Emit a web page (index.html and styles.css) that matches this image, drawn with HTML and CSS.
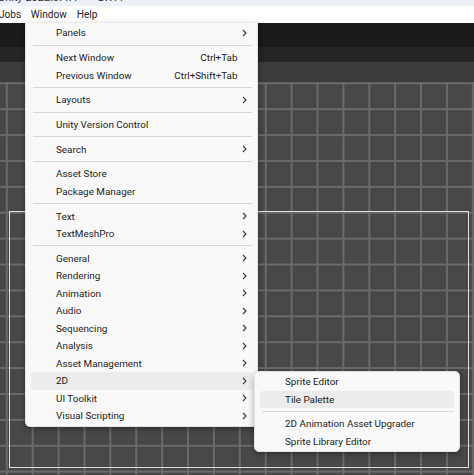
FILE: index.html
```html
<!DOCTYPE html>
<html>
<head>
<meta charset="utf-8">
<link rel="stylesheet" href="styles.css">
</head>
<body>
<div class="app">
  <div class="titlebar"><span class="title-a">Unity 2022.3.4f1</span><span class="title-b">&lt;DX11&gt;</span></div>
  <div class="menubar">
    <span class="mb-item mb-jobs">Jobs</span>
    <span class="mb-item">Window</span>
    <span class="mb-item">Help</span>
  </div>
  <div class="editor">
    <div class="band band1"></div>
    <div class="band band2"></div>
    <div class="band band3"></div>
    <div class="grid"><div class="selection"></div></div>
  </div>

  <div class="menu main-menu">
    <div class="item"><span class="label">Panels</span><span class="arrow"><svg width="5" height="8" viewBox="0 0 5 8"><path d="M1 1 L4 4 L1 7" /></svg></span></div>
    <div class="sep"></div>
    <div class="item"><span class="label">Next Window</span><span class="shortcut">Ctrl+Tab</span><span class="arrow"></span></div>
    <div class="item"><span class="label">Previous Window</span><span class="shortcut">Ctrl+Shift+Tab</span><span class="arrow"></span></div>
    <div class="sep"></div>
    <div class="item"><span class="label">Layouts</span><span class="arrow"><svg width="5" height="8" viewBox="0 0 5 8"><path d="M1 1 L4 4 L1 7" /></svg></span></div>
    <div class="sep"></div>
    <div class="item"><span class="label">Unity Version Control</span><span class="arrow"></span></div>
    <div class="sep"></div>
    <div class="item"><span class="label">Search</span><span class="arrow"><svg width="5" height="8" viewBox="0 0 5 8"><path d="M1 1 L4 4 L1 7" /></svg></span></div>
    <div class="sep"></div>
    <div class="item"><span class="label">Asset Store</span><span class="arrow"></span></div>
    <div class="item"><span class="label">Package Manager</span><span class="arrow"></span></div>
    <div class="sep"></div>
    <div class="item"><span class="label">Text</span><span class="arrow"><svg width="5" height="8" viewBox="0 0 5 8"><path d="M1 1 L4 4 L1 7" /></svg></span></div>
    <div class="item"><span class="label">TextMeshPro</span><span class="arrow"><svg width="5" height="8" viewBox="0 0 5 8"><path d="M1 1 L4 4 L1 7" /></svg></span></div>
    <div class="sep"></div>
    <div class="item"><span class="label">General</span><span class="arrow"><svg width="5" height="8" viewBox="0 0 5 8"><path d="M1 1 L4 4 L1 7" /></svg></span></div>
    <div class="item"><span class="label">Rendering</span><span class="arrow"><svg width="5" height="8" viewBox="0 0 5 8"><path d="M1 1 L4 4 L1 7" /></svg></span></div>
    <div class="item"><span class="label">Animation</span><span class="arrow"><svg width="5" height="8" viewBox="0 0 5 8"><path d="M1 1 L4 4 L1 7" /></svg></span></div>
    <div class="item"><span class="label">Audio</span><span class="arrow"><svg width="5" height="8" viewBox="0 0 5 8"><path d="M1 1 L4 4 L1 7" /></svg></span></div>
    <div class="item"><span class="label">Sequencing</span><span class="arrow"><svg width="5" height="8" viewBox="0 0 5 8"><path d="M1 1 L4 4 L1 7" /></svg></span></div>
    <div class="item"><span class="label">Analysis</span><span class="arrow"><svg width="5" height="8" viewBox="0 0 5 8"><path d="M1 1 L4 4 L1 7" /></svg></span></div>
    <div class="item"><span class="label">Asset Management</span><span class="arrow"><svg width="5" height="8" viewBox="0 0 5 8"><path d="M1 1 L4 4 L1 7" /></svg></span></div>
    <div class="item active"><span class="label">2D</span><span class="arrow"><svg width="5" height="8" viewBox="0 0 5 8"><path d="M1 1 L4 4 L1 7" /></svg></span></div>
    <div class="item"><span class="label">UI Toolkit</span><span class="arrow"><svg width="5" height="8" viewBox="0 0 5 8"><path d="M1 1 L4 4 L1 7" /></svg></span></div>
    <div class="item"><span class="label">Visual Scripting</span><span class="arrow"><svg width="5" height="8" viewBox="0 0 5 8"><path d="M1 1 L4 4 L1 7" /></svg></span></div>
  </div>

  <div class="menu sub-menu">
    <div class="item"><span class="label">Sprite Editor</span></div>
    <div class="item active"><span class="label">Tile Palette</span></div>
    <div class="sep"></div>
    <div class="item"><span class="label">2D Animation Asset Upgrader</span></div>
    <div class="item"><span class="label">Sprite Library Editor</span></div>
  </div>
</div>
</body>
</html>
```

FILE: styles.css
```css
html, body {
  margin: 0;
  padding: 0;
}
body {
  width: 474px;
  height: 475px;
  overflow: hidden;
  font-family: Roboto, "Noto Sans", sans-serif;
  font-size: 9.9px;
  color: #1c1c1c;
}
.app {
  position: relative;
  width: 474px;
  height: 475px;
  overflow: hidden;
  display: flex;
  flex-direction: column;
}
.titlebar {
  height: 6px;
  flex: none;
  background: #eef2f8;
  overflow: hidden;
  position: relative;
  white-space: nowrap;
}
.titlebar span {
  display: inline-block;
  line-height: 12px;
  font-size: 11px;
  margin-top: -8px;
  vertical-align: top;
  color: #333;
}
.title-a { margin-left: -2px; }
.title-b { margin-left: 14px; }
.menubar {
  height: 17px;
  flex: none;
  background: #ffffff;
  display: flex;
  align-items: center;
  color: #222;
  font-size: 10.1px;
}
.mb-item {
  margin-right: 10px;
  line-height: 17px;
}
.mb-jobs { margin-left: -1px; margin-right: 9.5px; }
.editor {
  flex: 1;
  display: flex;
  flex-direction: column;
  background: #474747;
}
.band { flex: none; }
.band1 { height: 24px; background: #1b1b1b; }
.band2 { height: 15px; background: #252525; }
.band3 { height: 20px; background: #3c3c3c; }
.grid {
  flex: 1;
  position: relative;
  background-color: #484848;
  background-image:
    linear-gradient(to right, #6a6a6a 0, #6a6a6a 1.5px, transparent 1.5px),
    linear-gradient(to bottom, #6a6a6a 0, #6a6a6a 1.5px, transparent 1.5px);
  background-size: 25.9px 25.9px;
  background-position: 5.8px 0.3px;
}
.selection {
  position: absolute;
  left: 9px;
  top: 129px;
  width: 458px;
  height: 255px;
  border: 1.5px solid #dedede;
}
.menu {
  position: absolute;
  background: #f9f9f9;
  box-shadow: 0 2px 6px rgba(0,0,0,0.35);
  border: 1px solid #e2e2e2;
  box-sizing: border-box;
}
.main-menu {
  left: 25px;
  top: 23px;
  width: 233px;
  height: 404px;
  padding: 1.2px 5px 2px 5px;
  border-radius: 0 0 5px 5px;
  border-top: none;
}
.sub-menu {
  left: 254px;
  top: 370.5px;
  width: 206px;
  height: 81.5px;
  padding: 1.5px 5px 2px 5px;
  border-radius: 5px;
}
.item {
  height: 17.5px;
  display: flex;
  align-items: center;
  padding-left: 25px;
  padding-right: 5.5px;
  border-radius: 3px;
  white-space: nowrap;
}
.item.active {
  background: #ececec;
}
.label { flex: 1; }
.shortcut {
  margin-right: 4px;
}
.arrow {
  width: 5px;
  height: 8px;
  display: flex;
}
.arrow svg path {
  fill: none;
  stroke: #3a3a3a;
  stroke-width: 1.1;
}
.sep {
  height: 1px;
  margin: 3.1px 0 3.1px 2px;
  background: #d8d8d8;
}
```
